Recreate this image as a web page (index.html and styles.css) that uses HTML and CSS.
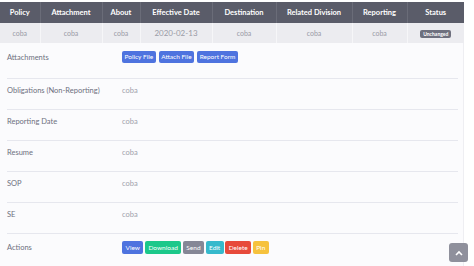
FILE: index.html
```html
<!DOCTYPE html>
<html lang="en">
<head>
    <meta charset="UTF-8">
    <title>Policy Detail</title>
    <link rel="stylesheet" href="styles.css">
</head>
<body>
    <div class="page">
        <table class="summary">
            <colgroup>
                <col style="width:40px"><col style="width:62px"><col style="width:38px"><col style="width:72px">
                <col style="width:64px"><col style="width:76px"><col style="width:55px"><col style="width:57px">
            </colgroup>
            <thead>
                <tr>
                    <th>Policy</th>
                    <th>Attachment</th>
                    <th>About</th>
                    <th>Effective Date</th>
                    <th>Destination</th>
                    <th>Related Division</th>
                    <th>Reporting</th>
                    <th>Status</th>
                </tr>
            </thead>
            <tbody>
                <tr>
                    <td>coba</td>
                    <td>coba</td>
                    <td>coba</td>
                    <td class="date">2020-02-13</td>
                    <td>coba</td>
                    <td>coba</td>
                    <td>coba</td>
                    <td><span class="badge">Unchanged</span></td>
                </tr>
            </tbody>
        </table>

        <div class="details">
            <div class="detail-row first">
                <div class="label">Attachments</div>
                <div class="value buttons">
                    <a class="btn blue">Policy File</a>
                    <a class="btn blue">Attach File</a>
                    <a class="btn blue">Report Form</a>
                </div>
            </div>
            <div class="detail-row">
                <div class="label">Obligations (Non-Reporting)</div>
                <div class="value">coba</div>
            </div>
            <div class="detail-row">
                <div class="label">Reporting Date</div>
                <div class="value">coba</div>
            </div>
            <div class="detail-row">
                <div class="label">Resume</div>
                <div class="value">coba</div>
            </div>
            <div class="detail-row">
                <div class="label">SOP</div>
                <div class="value">coba</div>
            </div>
            <div class="detail-row">
                <div class="label">SE</div>
                <div class="value">coba</div>
            </div>
            <div class="detail-row last">
                <div class="label">Actions</div>
                <div class="value buttons">
                    <a class="btn blue">View</a>
                    <a class="btn green">Download</a>
                    <a class="btn gray">Send</a>
                    <a class="btn cyan">Edit</a>
                    <a class="btn red">Delete</a>
                    <a class="btn yellow">Pin</a>
                </div>
            </div>
        </div>
    </div>

    <a class="scroll-top">
        <svg width="8" height="6" viewBox="0 0 8 6"><path d="M1 5 L4 2 L7 5" fill="none" stroke="#fff" stroke-width="1.6"/></svg>
    </a>
</body>
</html>
```

FILE: styles.css
```css
body {
    margin: 0;
    padding-top: 2px;
    background-color: #fff;
    font-family: Lato, "Open Sans", sans-serif;
    color: #858796;
    overflow: hidden;
}

.page {
    width: 463px;
    border-right: 1px solid #eeeef2;
    background-color: #fbfbfd;
    min-height: 264px;
}

.summary {
    width: 464px;
    border-collapse: collapse;
    table-layout: fixed;
}

.summary th {
    background-color: #5a5c69;
    color: #fff;
    font-size: 7.5px;
    font-weight: 700;
    height: 21px;
    padding: 0;
    text-align: center;
    border-left: 1px solid #6a6c78;
}

.summary td {
    background-color: #ececf0;
    color: #9a9ba6;
    font-size: 7px;
    height: 20px;
    padding: 0;
    text-align: center;
    border-left: 1px solid #f6f6f8;
}

.summary th:first-child,
.summary td:first-child {
    border-left: none;
}

.summary td.date {
    font-size: 8px;
}

.badge {
    display: inline-block;
    background-color: #6e707e;
    color: #fff;
    font-size: 5px;
    font-weight: 700;
    padding: 1px 3px;
    border-radius: 2px;
    line-height: 6px;
}

.details {
    padding: 0 5px 0 7px;
}

.detail-row {
    display: flex;
    align-items: flex-start;
    padding: 7px 0 14px;
    border-bottom: 1px solid #e6e7ee;
    font-size: 7.5px;
    line-height: 9px;
}

.detail-row.first {
    padding: 8px 0 15px;
    align-items: center;
}

.detail-row.last {
    border-bottom: none;
    padding-top: 7px;
    align-items: center;
}

.label {
    width: 115px;
    color: #6e707e;
}

.value {
    color: #a0a1ab;
}

.buttons {
    display: flex;
    gap: 3px;
}

.last .buttons {
    gap: 1.5px;
}

.btn {
    display: inline-block;
    color: #fff;
    font-size: 6.5px;
    line-height: 12px;
    height: 12px;
    padding: 0 2.5px;
    border-radius: 2px;
}

.last .btn {
    height: 13px;
    line-height: 13px;
    padding: 0 3.5px;
}

.blue { background-color: #4e73df; }
.green { background-color: #1cc88a; }
.gray { background-color: #858796; }
.cyan { background-color: #36b9cc; }
.red { background-color: #e74a3b; }
.yellow { background-color: #f6c23e; }

.scroll-top {
    position: fixed;
    left: 449px;
    top: 243px;
    width: 19px;
    height: 19px;
    border-radius: 3px;
    background-color: #8f909c;
    display: flex;
    align-items: center;
    justify-content: center;
}
```
